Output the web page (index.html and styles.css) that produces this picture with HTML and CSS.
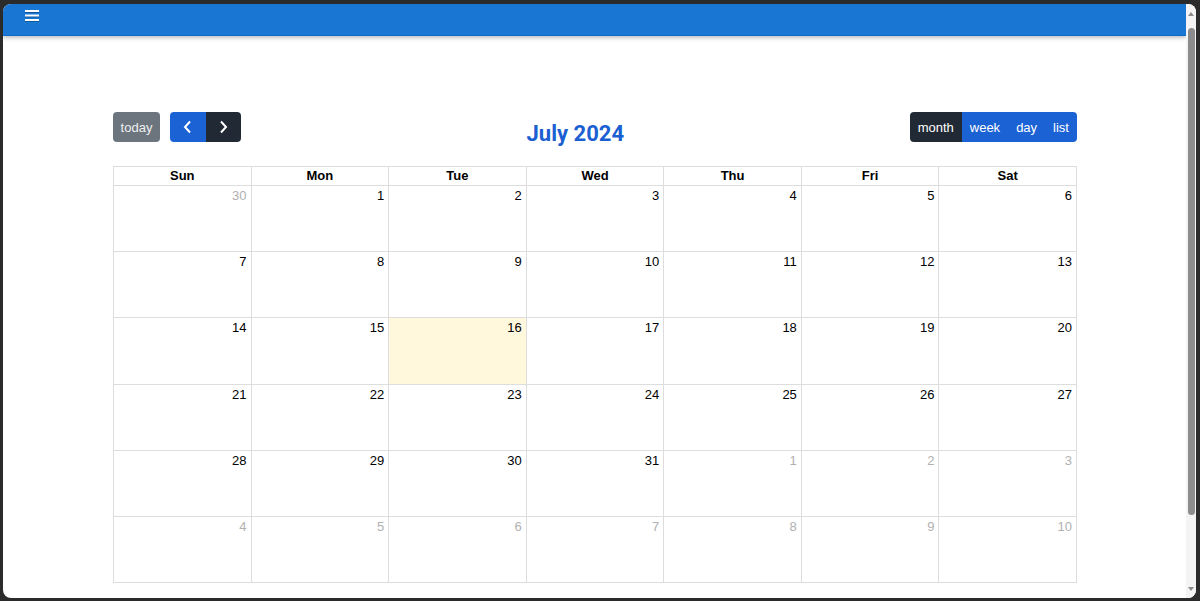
FILE: index.html
```html
<!DOCTYPE html>
<html lang="en">
<head>
    <meta charset="UTF-8">
    <meta name="viewport" content="width=device-width, initial-scale=1.0">
    <title>Calendar</title>
    <link rel="stylesheet" href="styles.css">
</head>
<body>
    <div class="window">
        <div class="page">
            <header class="appbar">
                <button class="menu-btn" aria-label="menu">
                    <svg width="14" height="12" viewBox="0 0 14 12">
                        <rect x="0" y="1" width="14" height="2" fill="#fff"/>
                        <rect x="0" y="5.5" width="14" height="2" fill="#fff"/>
                        <rect x="0" y="10" width="14" height="2" fill="#fff"/>
                    </svg>
                </button>
            </header>

            <main class="calendar">
                <div class="toolbar">
                    <div class="toolbar-chunk">
                        <button class="btn btn-today">today</button>
                        <div class="btn-group">
                            <button class="btn btn-blue btn-arrow" aria-label="prev">
                                <svg width="10" height="14" viewBox="0 0 10 14"><path d="M7 1.5 L2 7 L7 12.5" fill="none" stroke="#fff" stroke-width="2"/></svg>
                            </button>
                            <button class="btn btn-dark btn-arrow" aria-label="next">
                                <svg width="10" height="14" viewBox="0 0 10 14"><path d="M3 1.5 L8 7 L3 12.5" fill="none" stroke="#fff" stroke-width="2"/></svg>
                            </button>
                        </div>
                    </div>
                    <h2 class="title">July 2024</h2>
                    <div class="btn-group">
                        <button class="btn btn-dark">month</button>
                        <button class="btn btn-blue">week</button>
                        <button class="btn btn-blue">day</button>
                        <button class="btn btn-blue">list</button>
                    </div>
                </div>

                <div class="grid">
                    <div class="head">Sun</div>
                    <div class="head">Mon</div>
                    <div class="head">Tue</div>
                    <div class="head">Wed</div>
                    <div class="head">Thu</div>
                    <div class="head">Fri</div>
                    <div class="head">Sat</div>

                    <div class="day other">30</div>
                    <div class="day">1</div>
                    <div class="day">2</div>
                    <div class="day">3</div>
                    <div class="day">4</div>
                    <div class="day">5</div>
                    <div class="day">6</div>

                    <div class="day">7</div>
                    <div class="day">8</div>
                    <div class="day">9</div>
                    <div class="day">10</div>
                    <div class="day">11</div>
                    <div class="day">12</div>
                    <div class="day">13</div>

                    <div class="day">14</div>
                    <div class="day">15</div>
                    <div class="day today">16</div>
                    <div class="day">17</div>
                    <div class="day">18</div>
                    <div class="day">19</div>
                    <div class="day">20</div>

                    <div class="day">21</div>
                    <div class="day">22</div>
                    <div class="day">23</div>
                    <div class="day">24</div>
                    <div class="day">25</div>
                    <div class="day">26</div>
                    <div class="day">27</div>

                    <div class="day">28</div>
                    <div class="day">29</div>
                    <div class="day">30</div>
                    <div class="day">31</div>
                    <div class="day other">1</div>
                    <div class="day other">2</div>
                    <div class="day other">3</div>

                    <div class="day other">4</div>
                    <div class="day other">5</div>
                    <div class="day other">6</div>
                    <div class="day other">7</div>
                    <div class="day other">8</div>
                    <div class="day other">9</div>
                    <div class="day other">10</div>
                </div>
            </main>
        </div>

        <div class="scrollbar">
            <span class="arrow arrow-up"></span>
            <span class="thumb"></span>
            <span class="arrow arrow-down"></span>
        </div>
    </div>
</body>
</html>
```

FILE: styles.css
```css
* {
    margin: 0;
    padding: 0;
    box-sizing: border-box;
}

body {
    height: 601px;
    overflow: hidden;
    background: #2b2b2b;
    font-family: "Liberation Sans", Arial, sans-serif;
    padding: 4px 4px 3px 3px;
}

/* Ventana */
.window {
    height: 594px;
    background: #fff;
    border-radius: 8px;
    overflow: hidden;
    display: flex;
}

.page {
    flex: 1;
    display: flex;
    flex-direction: column;
}

.appbar {
    height: 32px;
    background: #1976d2;
    border-bottom: 1px solid #1169c9;
    box-shadow: 0 2px 4px rgba(0, 0, 0, 0.25);
    padding: 5px 0 0 22px;
}

.menu-btn {
    background: none;
    border: none;
    display: flex;
    filter: drop-shadow(0 1px 0 rgba(0, 0, 0, 0.25));
}

/* Calendario */
.calendar {
    width: 964px;
    margin: 76px 0 0 110px;
}

.toolbar {
    display: flex;
    justify-content: space-between;
    align-items: flex-start;
    height: 30px;
    margin-bottom: 24px;
}

.toolbar-chunk {
    display: flex;
    gap: 10px;
}

.btn-group {
    display: flex;
    border-radius: 4px;
    overflow: hidden;
}

.btn {
    height: 30px;
    padding: 0 8px;
    border: none;
    font-family: "Liberation Sans", Arial, sans-serif;
    font-size: 13px;
    color: #fff;
    display: flex;
    align-items: center;
    justify-content: center;
}

.btn-today {
    background: #6c757d;
    color: #eef0f2;
    border-radius: 4px;
    width: 47px;
}

.btn-blue {
    background: #1b62d4;
}

.btn-dark {
    background: #212a34;
}

.btn-arrow {
    width: 35.5px;
}

.title {
    font-family: Roboto, "Liberation Sans", sans-serif;
    font-size: 22px;
    font-weight: 700;
    line-height: 26px;
    color: #1b5fd2;
    padding-top: 9px;
}

.grid {
    display: grid;
    grid-template-columns: repeat(7, 1fr);
    grid-template-rows: 19px repeat(6, 66.2px);
    border-top: 1px solid #ddd;
    border-left: 1px solid #ddd;
}

.head,
.day {
    border-right: 1px solid #ddd;
    border-bottom: 1px solid #ddd;
    font-size: 13px;
    color: #000;
}

.head {
    font-weight: 700;
    text-align: center;
    line-height: 17px;
}

.day {
    text-align: right;
    padding: 2px 4px 0 0;
}

.day.other {
    color: #b0b0b0;
}

.day.today {
    background: #fff8dd;
}

/* Barra de rolagem */
.scrollbar {
    width: 10px;
    background: #f4f4f4;
    position: relative;
}

.thumb {
    position: absolute;
    left: 2px;
    top: 24px;
    width: 7px;
    height: 487px;
    background: #8c8c8c;
    border-radius: 4px;
}

.arrow {
    position: absolute;
    left: 2px;
    width: 0;
    height: 0;
    border-left: 3.5px solid transparent;
    border-right: 3.5px solid transparent;
}

.arrow-up {
    top: 8px;
    border-bottom: 4px solid #8a8a8a;
}

.arrow-down {
    bottom: 7px;
    border-top: 4px solid #8a8a8a;
}
```
